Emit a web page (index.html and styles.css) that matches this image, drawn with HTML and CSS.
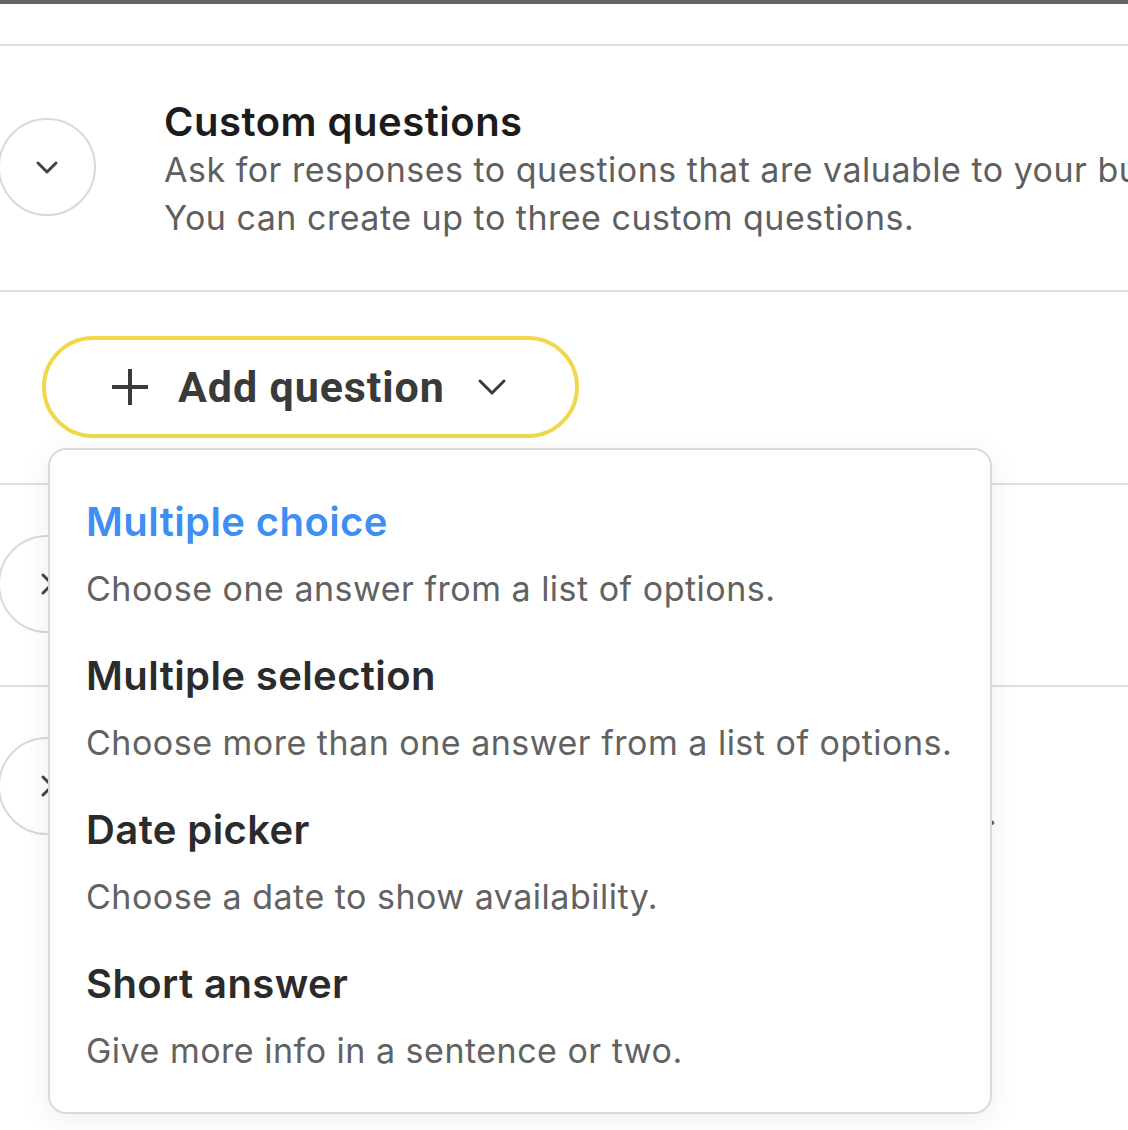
FILE: index.html
```html
<!DOCTYPE html>
<html>
<head>
<meta charset="UTF-8">
<title>Custom questions</title>
<link rel="stylesheet" href="styles.css">
</head>
<body>
	<div class="topBar"></div>
	<div class="page">
		<div class="section">
			<div class="toggle">
				<svg width="30" height="30" viewBox="0 0 30 30"><path d="M6 11 L15 20 L24 11" fill="none" stroke="#444" stroke-width="3" stroke-linecap="round" stroke-linejoin="round"/></svg>
			</div>
			<div class="sectionText">
				<h2 class="sectionTitle">Custom questions</h2>
				<p class="sectionDesc">Ask for responses to questions that are valuable to your business.<br>You can create up to three custom questions.</p>
			</div>
		</div>

		<div class="addArea">
			<button class="addButton">
				<svg class="plus" width="40" height="40" viewBox="0 0 40 40"><path d="M20 2 V38 M2 20 H38" stroke="#3a3a3a" stroke-width="4"/></svg>
				<span>Add question</span>
				<svg class="caret" width="30" height="30" viewBox="0 0 30 30"><path d="M3 9 L15 21 L27 9" fill="none" stroke="#3a3a3a" stroke-width="3" stroke-linecap="round" stroke-linejoin="round"/></svg>
			</button>

			<div class="menu">
				<div class="menuItem">
					<div class="itemTitle active">Multiple choice</div>
					<div class="itemDesc">Choose one answer from a list of options.</div>
				</div>
				<div class="menuItem">
					<div class="itemTitle">Multiple selection</div>
					<div class="itemDesc">Choose more than one answer from a list of options.</div>
				</div>
				<div class="menuItem">
					<div class="itemTitle">Date picker</div>
					<div class="itemDesc">Choose a date to show availability.</div>
				</div>
				<div class="menuItem">
					<div class="itemTitle">Short answer</div>
					<div class="itemDesc">Give more info in a sentence or two.</div>
				</div>
			</div>
		</div>

		<div class="section hidden">
			<div class="toggle">
				<svg width="30" height="30" viewBox="0 0 30 30"><path d="M11 6 L20 15 L11 24" fill="none" stroke="#444" stroke-width="3" stroke-linecap="round" stroke-linejoin="round"/></svg>
			</div>
			<div class="sectionText">
				<h2 class="sectionTitle">Booking policy</h2>
				<p class="sectionDesc">Let guests know about your policy.</p>
			</div>
		</div>
		<div class="section hidden">
			<div class="toggle">
				<svg width="30" height="30" viewBox="0 0 30 30"><path d="M11 6 L20 15 L11 24" fill="none" stroke="#444" stroke-width="3" stroke-linecap="round" stroke-linejoin="round"/></svg>
			</div>
			<div class="sectionText">
				<h2 class="sectionTitle">Confirmation</h2>
				<p class="sectionDesc">Share what guests need to know before a session.</p>
			</div>
		</div>
	</div>
</body>
</html>
```

FILE: styles.css
```css
*{
	box-sizing: border-box;
	font-family: 'Inter', sans-serif;
}
body{
	margin: 0;
	background: white;
}
.topBar{
	height: 4px;
	background: #666;
}
.page{
	height: 1126px;
	overflow: hidden;
	padding-top: 40px;
}
.section{
	display: flex;
	align-items: flex-start;
	gap: 68px;
	border-top: 2px solid #dedede;
	height: 246px;
	white-space: nowrap;
}
.section.hidden{
	height: 202px;
	align-items: center;
}
.toggle{
	flex: none;
	width: 98px;
	height: 98px;
	margin: 72px 0 0 -2px;
	border: 2px solid #d9d9d9;
	border-radius: 50%;
	display: flex;
	align-items: center;
	justify-content: center;
}
.section.hidden .toggle{
	margin-top: -2px;
}
.sectionText{
	margin-top: 52px;
}
.section.hidden .sectionText{
	margin-top: 4px;
}
.sectionTitle{
	margin: 0;
	font-size: 40px;
	font-weight: 600;
	line-height: 48px;
	color: #1c1c1c;
	letter-spacing: 0.5px;
}
.sectionDesc{
	margin: 0;
	font-size: 34px;
	line-height: 48px;
	color: #5f5f5f;
	letter-spacing: 0.5px;
}
.addArea{
	position: relative;
	border-top: 2px solid #dedede;
	padding: 44px 0 45px 42px;
}
.addButton{
	display: flex;
	align-items: center;
	height: 102px;
	width: 537px;
	padding: 0 0 0 64px;
	border: 4px solid #f0d84a;
	border-radius: 52px;
	background: white;
	color: #3a3a3a;
}
.addButton span{
	font-family: 'Roboto', sans-serif;
	font-size: 43px;
	font-weight: 700;
	letter-spacing: 0.9px;
	margin: 0 32px 0 28px;
}
.menu{
	position: absolute;
	left: 48px;
	top: 156px;
	width: 944px;
	height: 666px;
	background: white;
	border: 2px solid #dadada;
	border-radius: 18px;
	box-shadow: 0 6px 30px rgba(0,0,0,0.07);
	padding: 48px 0 0 36px;
	z-index: 2;
}
.menuItem{
	height: 154px;
}
.itemTitle{
	font-size: 40px;
	font-weight: 600;
	line-height: 48px;
	color: #2b2b2b;
	letter-spacing: 0.4px;
}
.itemTitle.active{
	color: #3f8ef3;
}
.itemDesc{
	margin-top: 19px;
	font-size: 34px;
	line-height: 48px;
	color: #626262;
	letter-spacing: 0.5px;
}
```
